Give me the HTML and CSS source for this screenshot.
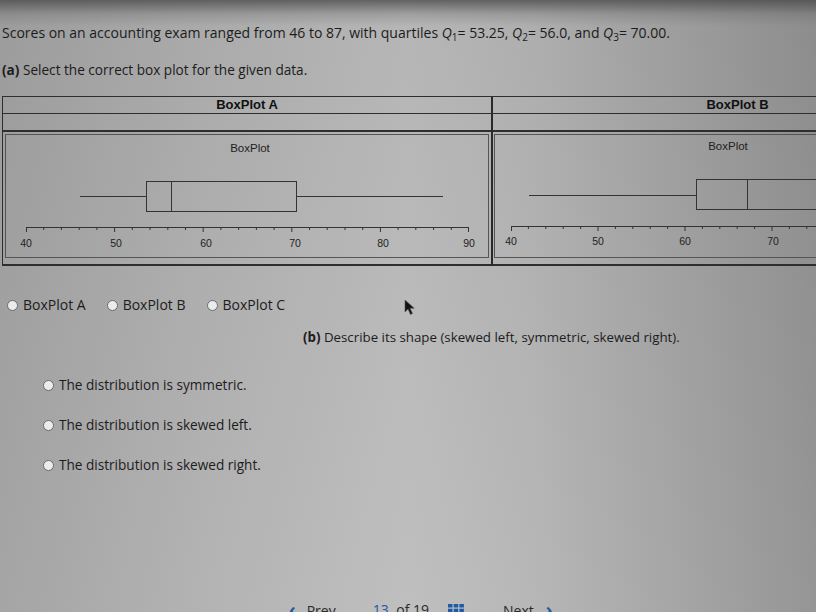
FILE: index.html
```html
<!DOCTYPE html>
<html>
<head>
<meta charset="utf-8">
<link rel="stylesheet" href="styles.css">
</head>
<body>
<div class="page">
  <p class="question">Scores on an accounting exam ranged from 46 to 87, with quartiles <i>Q</i><sub>1</sub>= 53.25, <i>Q</i><sub>2</sub>= 56.0, and <i>Q</i><sub>3</sub>= 70.00.</p>
  <p class="parta"><b>(a)</b> Select the correct box plot for the given data.</p>

  <div class="table">
    <div class="panel panel-a">
      <div class="hdr">BoxPlot A</div>
      <div class="row2"></div>
      <div class="plotrow">
        <div class="inner">
          <svg class="plot" width="483" height="122" viewBox="0 0 483 122">
            <text x="244" y="17" class="ptitle">BoxPlot</text>
            <line x1="74" y1="61.5" x2="140" y2="61.5" class="ln"/>
            <rect x="140.5" y="46.5" width="150" height="30" class="box"/>
            <line x1="165.5" y1="46.5" x2="165.5" y2="76.5" class="ln"/>
            <line x1="290" y1="61.5" x2="437" y2="61.5" class="ln"/>
            <line x1="20" y1="92.5" x2="463" y2="92.5" class="ln"/>
            <path class="ln" d="M20.5 92v5M37.7 92v3M55.4 92v3M73.2 92v3M90.9 92v3M108.6 92v5M126.3 92v3M144 92v3M161.8 92v3M179.5 92v3M197.2 92v5M214.9 92v3M232.6 92v3M250.4 92v3M268.1 92v3M285.8 92v5M303.5 92v3M321.2 92v3M339 92v3M356.7 92v3M374.4 92v5M392.1 92v3M409.8 92v3M427.6 92v3M445.3 92v3M462.5 92v5"/>
            <text x="20" y="112" class="lbl">40</text>
            <text x="110" y="112" class="lbl">50</text>
            <text x="200" y="112" class="lbl">60</text>
            <text x="289" y="112" class="lbl">70</text>
            <text x="377" y="112" class="lbl">80</text>
            <text x="463" y="112" class="lbl">90</text>
          </svg>
        </div>
      </div>
    </div>
    <div class="panel panel-b">
      <div class="hdr">BoxPlot B</div>
      <div class="row2"></div>
      <div class="plotrow">
        <div class="inner">
          <svg class="plot" width="483" height="122" viewBox="0 0 483 122">
            <text x="233" y="15" class="ptitle">BoxPlot</text>
            <line x1="34" y1="60.5" x2="201" y2="60.5" class="ln"/>
            <rect x="201.5" y="44.5" width="163" height="30" class="box"/>
            <line x1="252.5" y1="44.5" x2="252.5" y2="74.5" class="ln"/>
            <line x1="365" y1="60.5" x2="434" y2="60.5" class="ln"/>
            <line x1="16" y1="91.5" x2="451" y2="91.5" class="ln"/>
            <path class="ln" d="M16.5 91v5M33.4 91v3M50.8 91v3M68.2 91v3M85.6 91v3M103 91v5M120.4 91v3M137.8 91v3M155.2 91v3M172.6 91v3M190 91v5M207.4 91v3M224.8 91v3M242.2 91v3M259.6 91v3M277 91v5M294.4 91v3M311.8 91v3M329.2 91v3M346.6 91v3M364 91v5M381.4 91v3M398.8 91v3M416.2 91v3M433.6 91v3M450.5 91v5"/>
            <text x="16" y="110" class="lbl">40</text>
            <text x="103" y="110" class="lbl">50</text>
            <text x="190" y="110" class="lbl">60</text>
            <text x="278" y="110" class="lbl">70</text>
          </svg>
        </div>
      </div>
    </div>
  </div>

  <div class="choices">
    <label class="opt"><span class="radio"></span>BoxPlot A</label>
    <label class="opt"><span class="radio"></span>BoxPlot B</label>
    <label class="opt"><span class="radio"></span>BoxPlot C</label>
  </div>

  <p class="partb"><b>(b)</b> Describe its shape (skewed left, symmetric, skewed right).</p>

  <div class="shape">
    <label class="opt"><span class="radio"></span>The distribution is symmetric.</label>
    <label class="opt"><span class="radio"></span>The distribution is skewed left.</label>
    <label class="opt"><span class="radio"></span>The distribution is skewed right.</label>
  </div>

  <div class="nav">
    <span class="prev"><span class="chev">&#x2039;</span>Prev</span>
    <span class="count"><span class="cur">13</span> of 19</span>
    <svg class="grid" width="16" height="13" viewBox="0 0 16 13">
      <rect x="0" y="0" width="4.5" height="3.5"/><rect x="5.7" y="0" width="4.5" height="3.5"/><rect x="11.4" y="0" width="4.5" height="3.5"/>
      <rect x="0" y="4.7" width="4.5" height="3.5"/><rect x="5.7" y="4.7" width="4.5" height="3.5"/><rect x="11.4" y="4.7" width="4.5" height="3.5"/>
      <rect x="0" y="9.4" width="4.5" height="3.5"/><rect x="5.7" y="9.4" width="4.5" height="3.5"/><rect x="11.4" y="9.4" width="4.5" height="3.5"/>
    </svg>
    <span class="next">Next<span class="chev chev-r">&#x203A;</span></span>
  </div>

  <svg class="cursor" width="12" height="18" viewBox="0 0 12 18">
    <path d="M1 1 L1 13 L4 10 L6.5 15.5 L8.5 14.5 L6 9.2 L10.2 9.2 Z" fill="#111" stroke="#555" stroke-width="0.6"/>
  </svg>
</div>
</body>
</html>
```

FILE: styles.css
```css
html, body {
  margin: 0;
  padding: 0;
}
body {
  width: 816px;
  height: 612px;
  overflow: hidden;
  font-family: "Open Sans", "Liberation Sans", sans-serif;
  color: #1c1c1c;
  background:
    linear-gradient(to bottom, rgba(70,70,70,0.75) 0px, rgba(90,90,90,0.25) 14px, rgba(90,90,90,0) 26px),
    linear-gradient(to bottom, rgba(0,0,0,0.04) 0%, rgba(255,255,255,0.03) 100%),
    linear-gradient(to right, #a2a2a2 0%, #b1b1b1 25%, #bdbdbd 50%, #b5b5b5 65%, #a4a4a4 82%, #929292 100%);
}
.page {
  position: relative;
  width: 816px;
  height: 612px;
}
.question {
  margin: 0;
  padding: 25px 0 0 2px;
  font-size: 14px;
  line-height: 16px;
  white-space: nowrap;
}
.question sub {
  font-size: 10px;
  vertical-align: -3px;
  line-height: 0;
}
.parta {
  margin: 21px 0 0 2px;
  font-size: 13.6px;
  line-height: 16px;
}
.table {
  margin: 18px 0 0 2px;
  width: 814px;
  display: flex;
  overflow: hidden;
  border-top: 1px solid #2e2e2e;
}
.panel {
  flex: 0 0 auto;
  display: flex;
  flex-direction: column;
}
.panel-a {
  width: 488px;
  border-left: 1px solid #2e2e2e;
  border-right: 2px solid #2a2a2a;
}
.panel-b {
  width: 489px;
}
.hdr {
  height: 16px;
  line-height: 16px;
  text-align: center;
  font-family: "Liberation Sans", Arial, sans-serif;
  font-weight: bold;
  font-size: 13px;
  color: #111;
  border-bottom: 1px solid #2e2e2e;
}
.row2 {
  height: 16px;
  border-bottom: 2px solid #2e2e2e;
}
.plotrow {
  padding: 2px 2px 6px 2px;
  border-bottom: 2px solid #2e2e2e;
}
.panel-b .plotrow {
  padding-left: 1px;
}
.inner {
  height: 122px;
  border: 1px solid #555;
}
.plot {
  display: block;
}
.ptitle {
  font-family: "Liberation Sans", Arial, sans-serif;
  font-size: 11.5px;
  fill: #222;
  text-anchor: middle;
}
.lbl {
  font-family: "Liberation Sans", Arial, sans-serif;
  font-size: 10.5px;
  fill: #222;
  text-anchor: middle;
}
.ln {
  stroke: #333;
  stroke-width: 1;
  fill: none;
}
.box {
  stroke: #333;
  stroke-width: 1;
  fill: none;
}
.choices {
  display: flex;
  margin: 31px 0 0 7px;
}
.opt {
  display: flex;
  align-items: center;
  font-size: 13.6px;
  line-height: 16px;
}
.choices .opt {
  font-size: 14px;
  margin-right: 21px;
}
.radio {
  display: inline-block;
  width: 11px;
  height: 11px;
  border: 1px solid #6a6a6a;
  border-radius: 50%;
  background: #ececec;
  margin-right: 5px;
  box-sizing: border-box;
}
.partb {
  margin: 16px 0 0 303px;
  font-size: 13.3px;
  line-height: 16px;
}
.shape {
  margin: 32px 0 0 43px;
  display: flex;
  flex-direction: column;
  gap: 24px;
}
.nav {
  display: flex;
  align-items: center;
  margin: 128px 0 0 289px;
  font-size: 14px;
  line-height: 16px;
  color: #2a2a2a;
  white-space: nowrap;
}
.chev {
  color: #1f5aa6;
  font-weight: bold;
  font-size: 18px;
  margin-right: 11px;
}
.chev-r {
  margin-right: 0;
  margin-left: 12px;
}
.prev {
  margin-right: 37px;
}
.cur {
  color: #1f5aa6;
  margin-right: 4px;
}
.count {
  margin-right: 19px;
}
.grid {
  fill: #1f5aa6;
  margin-right: 39px;
}
.cursor {
  position: absolute;
  left: 404px;
  top: 299px;
}
```
